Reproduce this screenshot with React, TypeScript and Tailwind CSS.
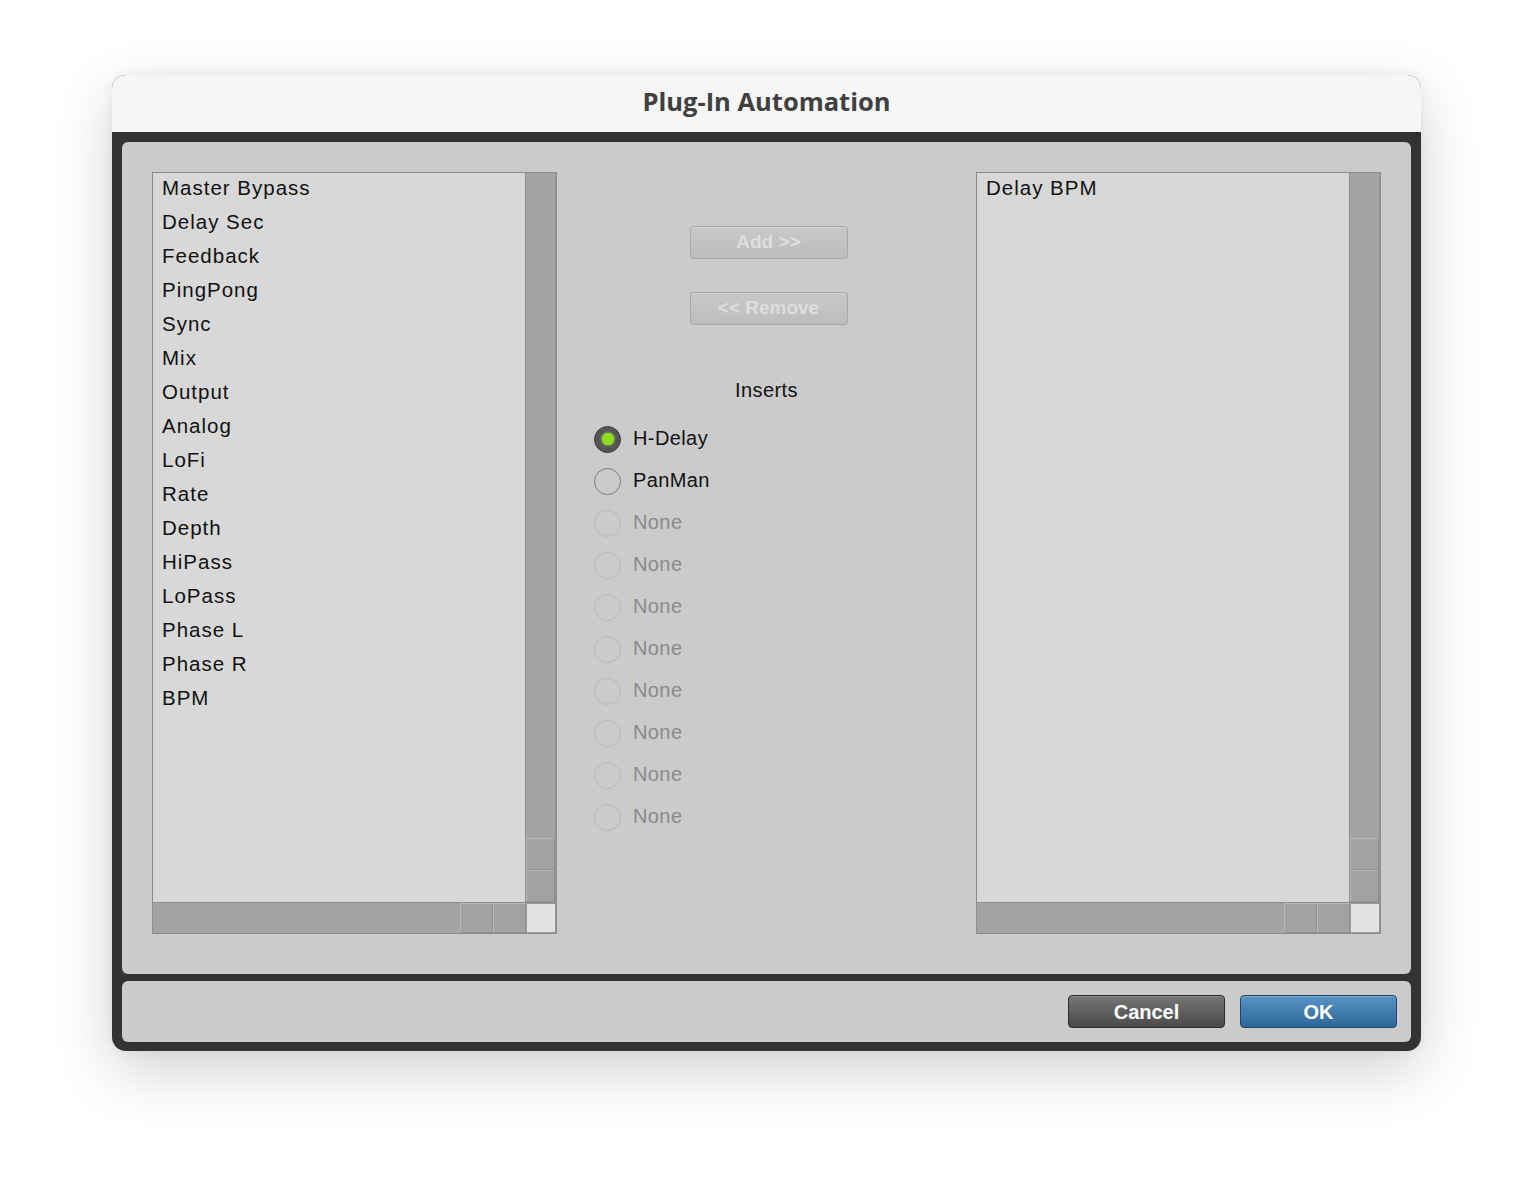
const params = [
  "Master Bypass",
  "Delay Sec",
  "Feedback",
  "PingPong",
  "Sync",
  "Mix",
  "Output",
  "Analog",
  "LoFi",
  "Rate",
  "Depth",
  "HiPass",
  "LoPass",
  "Phase L",
  "Phase R",
  "BPM",
];

const inserts = [
  { name: "H-Delay", state: "on" },
  { name: "PanMan", state: "off" },
  { name: "None", state: "disabled" },
  { name: "None", state: "disabled" },
  { name: "None", state: "disabled" },
  { name: "None", state: "disabled" },
  { name: "None", state: "disabled" },
  { name: "None", state: "disabled" },
  { name: "None", state: "disabled" },
  { name: "None", state: "disabled" },
];

const ScrollBtn = ({ className = "" }: { className?: string }) => (
  <div className={`bg-[#a2a2a2] border border-[#b8b8b8] border-r-[#8e8e8e] border-b-[#8e8e8e] ${className}`} />
);

// list box with fake scrollbars
const ListBox = ({ items }: { items: string[] }) => (
  <div className="w-[405px] h-[762px] border border-[#8c8c8c] flex flex-col bg-[#a3a3a3]">
    <div className="flex flex-1 min-h-0">
      <div className="flex-1 bg-[#d8d8d8] border-r border-[#8e8e8e] flex flex-col pt-[0px]">
        {items.map((it) => (
          <div key={it} className="h-[34px] leading-[30px] pl-[9px] text-[20.5px] text-[#111] tracking-[1px]">
            {it}
          </div>
        ))}
      </div>
      {/* vertical scrollbar */}
      <div className="w-[30px] flex flex-col justify-end bg-[#a3a3a3] border-r border-[#959595]">
        <ScrollBtn className="h-[32px]" />
        <ScrollBtn className="h-[32px]" />
      </div>
    </div>
    {/* horizontal scrollbar */}
    <div className="h-[31px] flex border-t border-[#8e8e8e]">
      <div className="flex-1 bg-[#a3a3a3]" />
      <ScrollBtn className="w-[33px]" />
      <ScrollBtn className="w-[33px]" />
      <div className="w-[30px] bg-[#e2e2e2] border border-[#9a9a9a]" />
    </div>
  </div>
);

const Radio = ({ state }: { state: string }) => {
  if (state === "on")
    return (
      <div className="w-[27px] h-[27px] rounded-full bg-[#555] border border-[#3e3e3e] flex items-center justify-center">
        <div className="w-[12px] h-[12px] rounded-full bg-[#8fdc1e] shadow-[0_0_3px_#b6ff4a]" />
      </div>
    );
  return (
    <div
      className={`w-[27px] h-[27px] rounded-full border-[1.5px] ${
        state === "off" ? "border-[#7a7a7a]" : "border-[#b9b9b9]"
      }`}
    />
  );
};

export default function App() {
  return (
    <div className="min-h-screen bg-white pt-[75px] pl-[112px] font-['Liberation_Sans',Arial,sans-serif]">
      <div className="w-[1309px] h-[976px] rounded-[14px] overflow-hidden bg-[#333] shadow-[0_20px_60px_rgba(0,0,0,0.18),0_0_12px_rgba(0,0,0,0.06)] flex flex-col">
        {/* title bar */}
        <div className="h-[57px] bg-[#f6f6f6] flex items-center justify-center">
          <span className="font-['Open_Sans',sans-serif] font-bold text-[25.5px] text-[#404040] -mt-[4px]">
            Plug-In Automation
          </span>
        </div>
        <div className="flex-1 flex flex-col px-[10px] pt-[10px] pb-[9px] gap-[7px]">
          {/* main panel */}
          <div className="h-[832px] rounded-[6px] bg-[#cbcbcb] flex justify-between p-[30px]">
            <ListBox items={params} />
            <div className="flex-1 flex flex-col items-center">
              <div className="mt-[54px] ml-[4px] w-[158px] h-[33px] rounded-[3px] border border-[#a8a8a8] bg-gradient-to-b from-[#c8c8c8] to-[#bdbdbd] shadow-[inset_0_1px_0_#d4d4d4] flex items-center justify-center text-[19px] font-bold text-[#dedede]">
                Add &gt;&gt;
              </div>
              <div className="mt-[33px] ml-[4px] w-[158px] h-[33px] rounded-[3px] border border-[#a8a8a8] bg-gradient-to-b from-[#c8c8c8] to-[#bdbdbd] shadow-[inset_0_1px_0_#d4d4d4] flex items-center justify-center text-[19px] font-bold text-[#dedede]">
                &lt;&lt; Remove
              </div>
              <div className="mt-[50px] text-[20px] text-[#111] tracking-[0.4px]">Inserts</div>
              <div className="self-start ml-[37px] mt-[13px] flex flex-col">
                {inserts.map((ins, i) => (
                  <div key={i} className="h-[42px] flex items-center gap-[12px]">
                    <Radio state={ins.state} />
                    <span
                      className={`text-[20px] tracking-[0.4px] -mt-[2px] ${
                        ins.state === "disabled" ? "text-[#8a8a8a]" : "text-[#111]"
                      }`}
                    >
                      {ins.name}
                    </span>
                  </div>
                ))}
              </div>
            </div>
            <ListBox items={["Delay BPM"]} />
          </div>
          {/* footer panel */}
          <div className="flex-1 rounded-[6px] bg-[#cbcbcb] flex justify-end items-start pt-[14px] pr-[14px] gap-[15px]">
            <button className="w-[157px] h-[33px] rounded-[4px] border border-[#2e2e2e] bg-gradient-to-b from-[#767676] to-[#4a4a4a] text-white font-bold text-[20px] shadow-[inset_0_1px_0_#8a8a8a]">
              Cancel
            </button>
            <button className="w-[157px] h-[33px] rounded-[4px] border border-[#1f4466] bg-gradient-to-b from-[#5a95c6] to-[#2d6699] text-white font-bold text-[20px] shadow-[inset_0_1px_0_#78acd6]">
              OK
            </button>
          </div>
        </div>
      </div>
    </div>
  );
}
